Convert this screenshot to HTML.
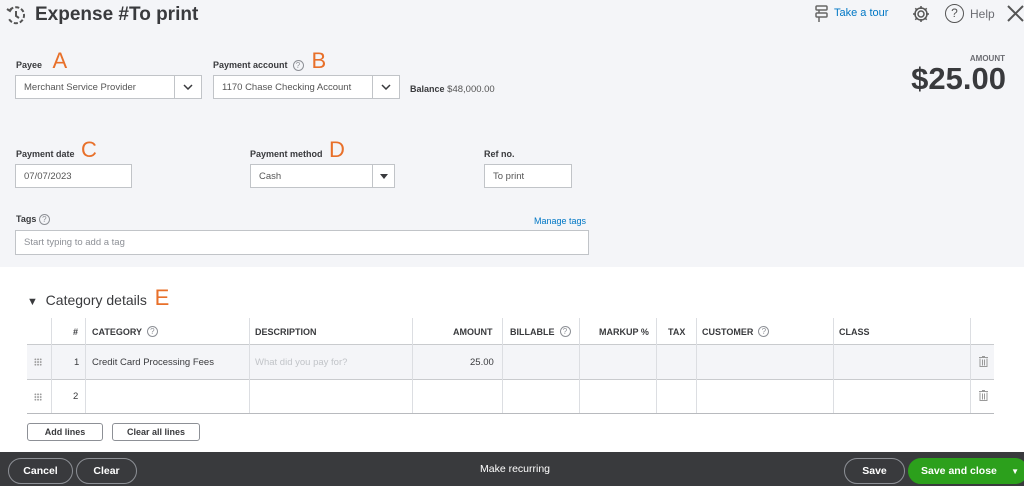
<!DOCTYPE html>
<html><head><style>
*{box-sizing:border-box;margin:0;padding:0}
body{width:1024px;height:486px;position:relative;overflow:hidden;background:#f4f5f8;font-family:"Liberation Sans",sans-serif;color:#393a3d}
.a{position:absolute}
.lbl{font-size:9px;font-weight:bold;color:#393a3d}
.ltr{color:#e8702a;font-size:22px;font-weight:normal}
.inp{position:absolute;background:#fff;border:1px solid #c1c4c8;font-size:9.5px;color:#555;padding-left:8px;display:flex;align-items:center}
.dd{position:absolute;right:0;top:0;bottom:0;border-left:1px solid #c1c4c8;display:flex;align-items:center;justify-content:center}
.q{display:inline-block;width:11px;height:11px;border:1px solid #8d9096;border-radius:50%;font-size:8px;text-align:center;line-height:9px;color:#8d9096;font-weight:normal;vertical-align:middle}
.th{position:absolute;top:318px;height:27px;font-size:9px;font-weight:bold;display:flex;align-items:center}
.vl{position:absolute;top:318px;height:95px;width:1px;background:#dcdee2}
.btn{position:absolute;border:1px solid #8d9096;border-radius:3px;background:#fff;font-size:9px;font-weight:bold;display:flex;align-items:center;justify-content:center}
.pill{position:absolute;top:458px;height:26px;border:1px solid #8d9096;border-radius:13px;color:#fff;font-size:10.5px;font-weight:bold;display:flex;align-items:center;justify-content:center}
.dots{position:absolute;width:8px;height:8px;background-image:radial-gradient(circle,#999 0.8px,transparent 1px);background-size:2.7px 2.7px}
</style></head><body>
<svg class="a" style="left:5px;top:4px" width="22" height="22" viewBox="0 0 22 22" fill="none" stroke="#555" stroke-width="2"><path d="M5 6a8 8 0 1 1-1 9" stroke-dasharray="4 2"/><path d="M11 7v5l3 2"/><path d="M2 5l3 2 2-3"/></svg>
<div class="a" style="left:35px;top:4px;font-size:19px;font-weight:bold;color:#393a3d">Expense #To print</div>
<svg class="a" style="left:814px;top:5px" width="16" height="18" viewBox="0 0 16 18" fill="none" stroke="#666" stroke-width="1.5"><rect x="2" y="1" width="11" height="4" rx="1"/><rect x="2" y="8" width="11" height="4" rx="1"/><path d="M5 12v5M5 5v3"/></svg>
<div class="a" style="left:834px;top:7px;font-size:11px;color:#0077c5">Take a tour</div>
<svg class="a" style="left:911px;top:4px" width="20" height="20" viewBox="0 0 20 20" fill="none" stroke="#555" stroke-width="1.5"><circle cx="10" cy="10" r="3"/><path d="M10 2v3M10 15v3M2 10h3M15 10h3M4.3 4.3l2.1 2.1M13.6 13.6l2.1 2.1M4.3 15.7l2.1-2.1M13.6 6.4l2.1-2.1"/><circle cx="10" cy="10" r="6"/></svg>
<div class="a" style="left:945px;top:4px;width:19px;height:19px;border:1.6px solid #555;border-radius:50%;font-size:12px;text-align:center;line-height:16px;color:#555">?</div>
<div class="a" style="left:970px;top:7px;font-size:12px;color:#6b6c72">Help</div>
<svg class="a" style="left:1007px;top:5px" width="17" height="17" viewBox="0 0 17 17" stroke="#555" stroke-width="2"><path d="M1 1l15 15M16 1L1 16"/></svg>
<div class="a" style="right:19px;top:54px;font-size:8px;font-weight:bold;color:#6b6c72">AMOUNT</div>
<div class="a" style="right:18px;top:61px;font-size:31px;font-weight:bold;color:#393a3d">$25.00</div>

<div class="a lbl" style="left:16px;top:48px">Payee <span class="ltr" style="margin-left:8px">A</span></div>
<div class="inp" style="left:15px;top:75px;width:187px;height:24px">Merchant Service Provider<div class="dd" style="width:27px"><svg width="10" height="6"><path d="M1 1l4 4 4-4" stroke="#393a3d" stroke-width="1.5" fill="none"/></svg></div></div>
<div class="a lbl" style="left:213px;top:48px">Payment account &nbsp;<span class="q">?</span><span class="ltr" style="margin-left:8px">B</span></div>
<div class="inp" style="left:213px;top:75px;width:187px;height:24px">1170 Chase Checking Account<div class="dd" style="width:27px"><svg width="10" height="6"><path d="M1 1l4 4 4-4" stroke="#393a3d" stroke-width="1.5" fill="none"/></svg></div></div>
<div class="a" style="left:410px;top:84px;font-size:9.5px;color:#555"><b style="color:#393a3d;font-size:9px">Balance</b> $48,000.00</div>

<div class="a lbl" style="left:16px;top:137px">Payment date <span class="ltr" style="margin-left:4px">C</span></div>
<div class="inp" style="left:15px;top:164px;width:117px;height:24px">07/07/2023</div>
<div class="a lbl" style="left:250px;top:137px">Payment method <span class="ltr" style="margin-left:4px">D</span></div>
<div class="inp" style="left:250px;top:164px;width:145px;height:24px">Cash<div class="dd" style="width:22px"><svg width="8" height="5"><path d="M0 0h8L4 5z" fill="#393a3d"/></svg></div></div>
<div class="a lbl" style="left:484px;top:149px">Ref no.</div>
<div class="inp" style="left:484px;top:164px;width:88px;height:24px">To print</div>

<div class="a lbl" style="left:16px;top:214px">Tags <span class="q">?</span></div>
<div class="a" style="left:534px;top:216px;font-size:9px;color:#0077c5">Manage tags</div>
<div class="inp" style="left:15px;top:230px;width:574px;height:25px;color:#8d9096">Start typing to add a tag</div>

<div class="a" style="left:0;top:267px;width:1024px;height:185px;background:#fff"></div>
<div class="a" style="left:27px;top:285px;font-size:14px;color:#393a3d"><span style="font-size:11px">▼</span>&nbsp; Category details &nbsp;<span class="ltr">E</span></div>

<div class="a" style="left:27px;top:345px;width:967px;height:34px;background:#f4f5f8"></div>
<div class="a" style="left:27px;top:344px;width:967px;height:1px;background:#c9cbce"></div>
<div class="a" style="left:27px;top:379px;width:967px;height:1px;background:#c9cbce"></div>
<div class="a" style="left:27px;top:413px;width:967px;height:1px;background:#b8babe"></div>
<div class="vl" style="left:51px"></div><div class="vl" style="left:85px"></div><div class="vl" style="left:249px"></div><div class="vl" style="left:412px"></div><div class="vl" style="left:502px"></div><div class="vl" style="left:579px"></div><div class="vl" style="left:656px"></div><div class="vl" style="left:696px"></div><div class="vl" style="left:833px"></div><div class="vl" style="left:970px"></div>
<div class="th" style="left:73px">#</div>
<div class="th" style="left:92px">CATEGORY &nbsp;<span class="q">?</span></div>
<div class="th" style="left:255px">DESCRIPTION</div>
<div class="th" style="left:453px">AMOUNT</div>
<div class="th" style="left:510px">BILLABLE &nbsp;<span class="q">?</span></div>
<div class="th" style="left:599px">MARKUP %</div>
<div class="th" style="left:668px">TAX</div>
<div class="th" style="left:702px">CUSTOMER &nbsp;<span class="q">?</span></div>
<div class="th" style="left:839px">CLASS</div>

<div class="dots" style="left:34px;top:358px"></div>
<div class="a" style="left:74px;top:357px;font-size:9.5px">1</div>
<div class="a" style="left:92px;top:357px;font-size:9.5px">Credit Card Processing Fees</div>
<div class="a" style="left:255px;top:357px;font-size:9.5px;color:#c1c4c8">What did you pay for?</div>
<div class="a" style="left:470px;top:357px;font-size:9.5px">25.00</div>
<div class="dots" style="left:34px;top:393px"></div>
<div class="a" style="left:73px;top:391px;font-size:9.5px">2</div>
<svg class="a" style="left:979px;top:356px" width="9" height="11" viewBox="0 0 9 11" fill="none" stroke="#999"><path d="M0 1.5h9M3 .5h3M1 2.5v8h7v-8M3.5 3.5v6M5.5 3.5v6"/></svg>
<svg class="a" style="left:979px;top:390px" width="9" height="11" viewBox="0 0 9 11" fill="none" stroke="#999"><path d="M0 1.5h9M3 .5h3M1 2.5v8h7v-8M3.5 3.5v6M5.5 3.5v6"/></svg>

<div class="btn" style="left:27px;top:423px;width:76px;height:18px">Add lines</div>
<div class="btn" style="left:112px;top:423px;width:88px;height:18px">Clear all lines</div>

<div class="a" style="left:0;top:452px;width:1024px;height:34px;background:#393a3d"></div>
<div class="pill" style="left:8px;width:65px">Cancel</div>
<div class="pill" style="left:76px;width:61px">Clear</div>
<div class="a" style="left:480px;top:463px;font-size:10.5px;color:#fff">Make recurring</div>
<div class="pill" style="left:844px;width:61px">Save</div>
<div class="pill" style="left:908px;width:120px;background:#2ca01c;border-color:#2ca01c;justify-content:flex-start;padding-left:12px">Save and close<span style="position:absolute;right:8px;font-size:8px">▼</span></div>
</body></html>
